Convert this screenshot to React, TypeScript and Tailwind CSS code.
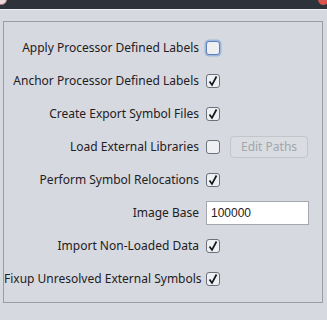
const rows: { label: string; kind: "check" | "button" | "input"; checked?: boolean; focus?: boolean }[] = [
  { label: "Apply Processor Defined Labels", kind: "check", checked: false, focus: true },
  { label: "Anchor Processor Defined Labels", kind: "check", checked: true },
  { label: "Create Export Symbol Files", kind: "check", checked: true },
  { label: "Load External Libraries", kind: "button", checked: false },
  { label: "Perform Symbol Relocations", kind: "check", checked: true },
  { label: "Image Base", kind: "input" },
  { label: "Import Non-Loaded Data", kind: "check", checked: true },
  { label: "Fixup Unresolved External Symbols", kind: "check", checked: true },
];

const Check = ({ checked, focus }: { checked?: boolean; focus?: boolean }) => (
  <div
    className={
      "w-[14px] h-[14px] rounded-[3px] border bg-[#eef0f3] flex items-center justify-center " +
      (focus ? "border-[#5b7fb0] shadow-[0_0_0_1.5px_#9db8dc]" : "border-[#6b717b]")
    }
  >
    {checked && (
      <svg width="12" height="12" viewBox="0 0 12 12">
        <path d="M2.5 6.5 L5 10 L9.5 1.5" fill="none" stroke="#14171c" strokeWidth="1.7" />
      </svg>
    )}
  </div>
);

export default function App() {
  return (
    <div className="w-[327px] h-[320px] bg-[#d6d9df] overflow-hidden relative text-[12px] text-[#1f2023] font-['Noto_Sans',sans-serif]">
      <div className="h-[9px] bg-[#2e323b] relative">
        <div className="absolute left-[-4px] top-[-6px] w-[11px] h-[11px] rounded-full bg-[#eadada] border border-[#b88]" />
        <div className="absolute right-[-2px] top-[-6px] w-[11px] h-[11px] rounded-full bg-[#d9534f]" />
      </div>
      <div className="h-px bg-[#eef0f3]" />
      <div className="ml-[3px] mt-[11px] w-[320px] h-[282px] border border-[#9a9da2] pt-[9px]">
        {rows.map((r) => (
          <div key={r.label} className="h-[33px] flex items-center">
            <div className="w-[198px] text-right pr-[3px] whitespace-nowrap">{r.label}</div>
            {r.kind === "check" && (
              <div className="ml-[4px]">
                <Check checked={r.checked} focus={r.focus} />
              </div>
            )}
            {r.kind === "button" && (
              <div className="ml-[4px] flex items-center">
                <Check checked={false} />
                <div className="ml-[10px] w-[78px] h-[22px] rounded-[4px] border border-[#c2c5ca] bg-[#d9dce1] text-[#a3a6ab] flex items-center justify-center">
                  Edit Paths
                </div>
              </div>
            )}
            {r.kind === "input" && (
              <div className="ml-[4px] w-[103px] h-[24px] bg-white border border-[#a5a8ad] flex items-center pl-[4px] font-['Liberation_Sans',sans-serif]">
                100000
              </div>
            )}
          </div>
        ))}
      </div>
    </div>
  );
}
